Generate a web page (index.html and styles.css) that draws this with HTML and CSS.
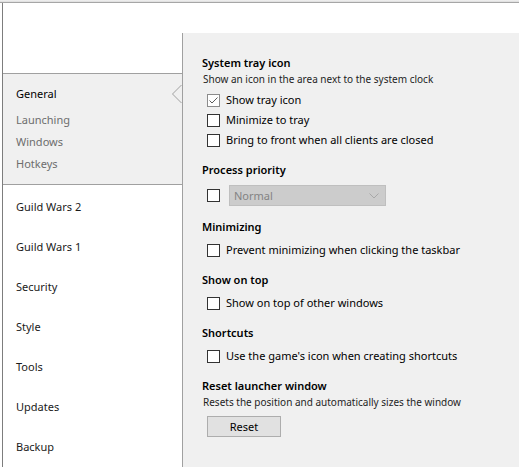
FILE: index.html
```html
<!DOCTYPE html>
<html lang="en">
<head>
    <meta charset="UTF-8">
    <title>Settings</title>
    <link rel="stylesheet" href="styles.css">
</head>
<body>
    <div class="titlebar"></div>
    <div class="window">
        <div class="sidebar">
            <div class="nav-group">
                <div class="nav-title">General</div>
                <div class="nav-sub">Launching</div>
                <div class="nav-sub">Windows</div>
                <div class="nav-sub">Hotkeys</div>
            </div>
            <div class="nav-list">
                <div class="nav-item">Guild Wars 2</div>
                <div class="nav-item">Guild Wars 1</div>
                <div class="nav-item">Security</div>
                <div class="nav-item">Style</div>
                <div class="nav-item">Tools</div>
                <div class="nav-item">Updates</div>
                <div class="nav-item">Backup</div>
            </div>
        </div>

        <div class="panel">
            <svg class="notch" width="11" height="19" viewBox="0 0 11 19">
                <polygon points="11,0 10.5,0 1.5,9.5 10.5,19 11,19" fill="#f0f0f0"/>
                <polyline points="10.5,0 1.5,9 10.5,18" fill="none" stroke="#a0a0a0" stroke-width="1"/>
            </svg>

            <div class="section">
                <div class="heading">System tray icon</div>
                <div class="desc">Show an icon in the area next to the system clock</div>
                <div class="options tight">
                    <div class="row">
                        <span class="box checked">
                            <svg width="11" height="11" viewBox="0 0 11 11"><polyline points="1.5,5.5 4,8 9.5,2.5" fill="none" stroke="#5c5c5c" stroke-width="1"/></svg>
                        </span>
                        Show tray icon
                    </div>
                    <div class="row"><span class="box"></span>Minimize to tray</div>
                    <div class="row"><span class="box"></span>Bring to front when all clients are closed</div>
                </div>
            </div>

            <div class="section">
                <div class="heading">Process priority</div>
                <div class="select-row">
                    <span class="box"></span>
                    <div class="select">
                        <span>Normal</span>
                        <svg width="10" height="6" viewBox="0 0 10 6"><polyline points="0.5,0.5 5,5 9.5,0.5" fill="none" stroke="#a8a8a8" stroke-width="1"/></svg>
                    </div>
                </div>
            </div>

            <div class="section">
                <div class="heading">Minimizing</div>
                <div class="options">
                    <div class="row"><span class="box"></span>Prevent minimizing when clicking the taskbar</div>
                </div>
            </div>

            <div class="section">
                <div class="heading">Show on top</div>
                <div class="options">
                    <div class="row"><span class="box"></span>Show on top of other windows</div>
                </div>
            </div>

            <div class="section">
                <div class="heading">Shortcuts</div>
                <div class="options">
                    <div class="row"><span class="box"></span>Use the game's icon when creating shortcuts</div>
                </div>
            </div>

            <div class="section">
                <div class="heading">Reset launcher window</div>
                <div class="desc">Resets the position and automatically sizes the window</div>
                <button class="btn">Reset</button>
            </div>
        </div>
    </div>
</body>
</html>
```

FILE: styles.css
```css
* {
    margin: 0;
    padding: 0;
    box-sizing: border-box;
}

body {
    font-family: 'Noto Sans', sans-serif;
    font-size: 11px;
    line-height: 16px;
    color: #000;
    background: #fff;
    height: 467px;
    overflow: hidden;
    display: flex;
    flex-direction: column;
}

.titlebar {
    height: 3px;
    background: linear-gradient(#f2f2f2, #dcdcdc);
}

.window {
    flex: 1;
    display: flex;
    border-top: 1px solid #a6a6a6;
    padding-left: 2px;
}

/* left navigation */
.sidebar {
    width: 180px;
    border-left: 1px solid #7d7d7d;
    padding-top: 70px;
    background: #fff;
}

.nav-group {
    background: #f0f0f0;
    border-top: 1px solid #a0a0a0;
    border-bottom: 1px solid #a0a0a0;
    padding: 12px 0 12px 13px;
    display: flex;
    flex-direction: column;
    gap: 6px;
}

.nav-title {
    margin-bottom: 4px;
}

.nav-sub {
    color: #6d6d6d;
}

.nav-list {
    padding-top: 2px;
}

.nav-item {
    height: 40px;
    display: flex;
    align-items: center;
    padding-left: 13px;
    color: #1a1a1a;
}

/* settings panel */
.panel {
    flex: 1;
    margin-top: 30px;
    background: #f0f0f0;
    border-left: 1px solid #a0a0a0;
    padding: 22px 19px;
    position: relative;
}

.notch {
    position: absolute;
    left: -12px;
    top: 52px;
}

.section + .section {
    margin-top: 12px;
}

.heading {
    font-weight: 600;
}

.desc {
    font-size: 10px;
    color: #1e1e1e;
    padding-left: 1px;
}

.options {
    margin-top: 5px;
}

.options.tight {
    margin-top: 3px;
}

.row {
    height: 20px;
    display: flex;
    align-items: center;
    padding-left: 5px;
    gap: 6px;
}

.box {
    width: 13px;
    height: 13px;
    border: 1px solid #333;
    background: #fff;
    display: flex;
    align-items: center;
    justify-content: center;
    flex-shrink: 0;
}

.box.checked {
    border-color: #8c8c8c;
}

.select-row {
    height: 23px;
    margin-top: 6px;
    display: flex;
    align-items: center;
    padding-left: 5px;
    gap: 9px;
}

.select {
    width: 157px;
    height: 21px;
    background: #cccccc;
    border: 1px solid #bfbfbf;
    color: #838383;
    display: flex;
    align-items: center;
    justify-content: space-between;
    padding: 0 6px 0 4px;
}

.btn {
    display: block;
    margin: 6px 0 0 5px;
    width: 74px;
    height: 21px;
    background: #e1e1e1;
    border: 1px solid #adadad;
    font-family: inherit;
    font-size: 11px;
    color: #000;
}
```
